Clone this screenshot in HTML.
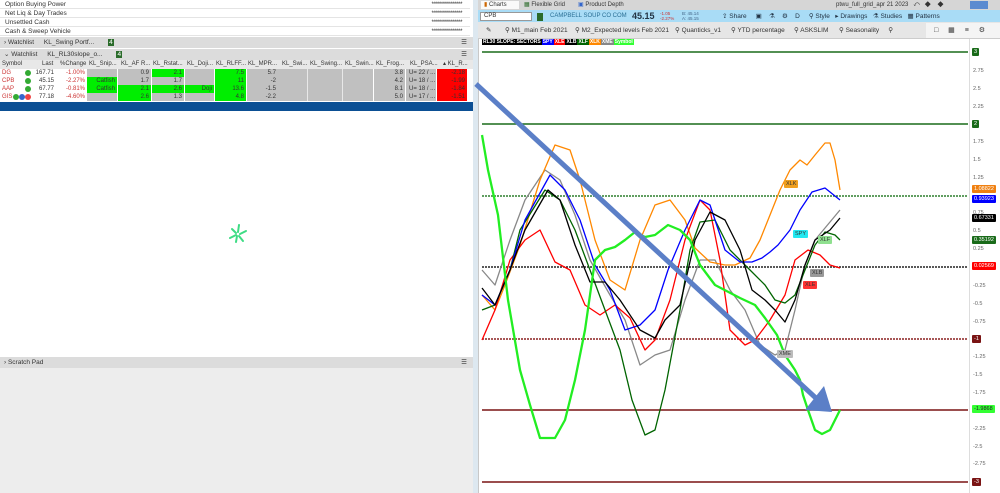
<!DOCTYPE html><html><head><meta charset="utf-8"><style>
*{margin:0;padding:0;box-sizing:border-box}
body{width:1000px;height:493px;overflow:hidden;background:#fff;font-family:"Liberation Sans",sans-serif;font-size:6.5px;color:#333;position:relative}
.a{position:absolute;white-space:nowrap}
.row{position:absolute;left:0;width:470px;height:9px;border-bottom:1px solid #e4e4e4;padding-left:5px;line-height:9px;font-size:6.5px}
.row span{position:absolute;right:8px;letter-spacing:-0.5px}
.hdr{position:absolute;left:0;width:473px;height:11px;background:#dcdcdc;line-height:11px;font-size:6.5px;padding-left:4px}
.c{position:absolute;height:8px;line-height:8px;font-size:6px;text-align:right;padding-right:2px;overflow:hidden}
.g{background:#00ee00}.r{background:#f00}.gr{background:#c0c0c0}
.ax{position:absolute;left:973px;font-size:5.5px;color:#666}
.bx{position:absolute;font-size:5.5px;color:#fff;padding:0 2px;line-height:8px;border-radius:1px}
</style></head><body>
<div class="row" style="top:0">Option Buying Power<span>***************</span></div>
<div class="row" style="top:9px">Net Liq &amp; Day Trades<span>***************</span></div>
<div class="row" style="top:18px">Unsettled Cash<span>***************</span></div>
<div class="row" style="top:27px">Cash &amp; Sweep Vehicle<span>***************</span></div>
<div class="hdr" style="top:37px">› Watchlist <span style="margin-left:8px">KL_Swing Portf...</span><span style="margin-left:14px;background:#2a6b2a;color:#fff;padding:0 1px">4</span><span style="position:absolute;right:6px">☰</span></div>
<div class="hdr" style="top:49px">⌄ Watchlist <span style="margin-left:8px">KL_RL30slope_o...</span><span style="margin-left:14px;background:#2a6b2a;color:#fff;padding:0 1px">4</span><span style="position:absolute;right:6px">☰</span></div>
<div class="a" style="top:60px;left:0;width:473px;height:9px;background:#e8e8e8;font-size:6px;line-height:9px"></div>
<div class="a" style="top:60px;left:2px;font-size:6px;line-height:9px">Symbol</div>
<div class="a" style="top:60px;left:42px;font-size:6px;line-height:9px">Last</div>
<div class="a" style="top:60px;left:60px;font-size:6px;line-height:9px">%Change</div>
<div class="a" style="top:60px;left:89px;font-size:6px;line-height:9px">KL_Snip...</div>
<div class="a" style="top:60px;left:121px;font-size:6px;line-height:9px">KL_AF R...</div>
<div class="a" style="top:60px;left:153px;font-size:6px;line-height:9px">KL_Rstat...</div>
<div class="a" style="top:60px;left:187px;font-size:6px;line-height:9px">KL_Doji...</div>
<div class="a" style="top:60px;left:216px;font-size:6px;line-height:9px">KL_RLFF...</div>
<div class="a" style="top:60px;left:248px;font-size:6px;line-height:9px">KL_MPR...</div>
<div class="a" style="top:60px;left:282px;font-size:6px;line-height:9px">KL_Swi...</div>
<div class="a" style="top:60px;left:310px;font-size:6px;line-height:9px">KL_Swing...</div>
<div class="a" style="top:60px;left:345px;font-size:6px;line-height:9px">KL_Swin...</div>
<div class="a" style="top:60px;left:376px;font-size:6px;line-height:9px">KL_Frog...</div>
<div class="a" style="top:60px;left:410px;font-size:6px;line-height:9px">KL_PSA...</div>
<div class="a" style="top:60px;left:443px;font-size:6px;line-height:9px">▴ KL_R...</div>
<div class="a" style="top:102px;left:0;width:473px;height:9px;background:#0b4f94"></div>
<svg class="a" style="left:228px;top:224px" width="20" height="20" viewBox="0 0 20 20"><g stroke="#3ddc84" stroke-width="2" stroke-linecap="round"><line x1="10" y1="8" x2="11" y2="1"/><line x1="12" y1="10" x2="18" y2="7"/><line x1="11" y1="12" x2="15" y2="17"/><line x1="9" y1="12" x2="8" y2="18"/><line x1="8" y1="11" x2="2" y2="14"/><line x1="8" y1="9" x2="4" y2="5"/></g></svg>
<div class="hdr" style="top:357px;height:11px">› Scratch Pad<span style="position:absolute;right:6px">☰</span></div>
<div class="a" style="top:368px;left:0;width:473px;height:125px;background:#ededed"></div>
<div class="a" style="top:0;left:473px;width:5px;height:493px;background:#dde8f0"></div>
<div class="a" style="top:0;left:478px;width:522px;height:10px;background:#d6d6d6"></div>
<div class="a" style="top:1px;left:481px;width:38px;height:8px;background:#fafafa;font-size:6px;line-height:8px;padding-left:3px"><span style="color:#c60">▮</span> Charts</div>
<div class="a" style="top:1px;left:524px;font-size:6px;line-height:8px"><span style="color:#2a6b2a">▦</span> Flexible Grid</div>
<div class="a" style="top:1px;left:578px;font-size:6px;line-height:8px"><span style="color:#36c">▣</span> Product Depth</div>
<div class="a" style="top:1px;left:836px;font-size:6px;line-height:8px">ptwu_full_grid_apr 21 2023 &nbsp;&nbsp;⤺ &nbsp;&nbsp;◆ &nbsp;&nbsp; ◆</div>
<div class="a" style="top:1px;left:970px;width:18px;height:8px;background:#5b8bd0"></div>
<div class="a" style="top:10px;left:478px;width:522px;height:12px;background:#a9dcf6"></div>
<div class="a" style="top:12px;left:480px;width:52px;height:9px;background:#fff;border:1px solid #999;font-size:6px;line-height:7px;padding-left:3px">CPB</div>
<div class="a" style="top:13px;left:537px;width:6px;height:8px;background:#2a6b2a"></div>
<div class="a" style="top:12px;left:550px;font-size:6px;line-height:9px;color:#2a6f95">CAMPBELL SOUP CO COM</div>
<div class="a" style="top:11px;left:632px;font-size:9px;font-weight:bold;line-height:11px;color:#234">45.15</div>
<div class="a" style="top:11px;left:660px;font-size:4.5px;line-height:5px;color:#c33">-1.05<br>-2.27%</div>
<div class="a" style="top:11px;left:682px;font-size:4.5px;line-height:5px;color:#468">B: 45.14<br>A: 45.15</div>
<div class="a" style="top:12px;left:722px;font-size:6.5px;line-height:9px;color:#234">⇪ Share &nbsp;&nbsp;&nbsp; ▣ &nbsp;&nbsp; ⚗ &nbsp;&nbsp; ⚙ &nbsp;&nbsp; D &nbsp;&nbsp;&nbsp; ⚲ Style &nbsp; ▸ Drawings &nbsp; ⚗ Studies &nbsp; ▦ Patterns</div>
<div class="a" style="top:22px;left:478px;width:522px;height:17px;background:#e6e6e6;border-bottom:1px solid #ccc"></div>
<div class="a" style="top:26px;left:486px;font-size:6.5px;line-height:9px;color:#333">✎</div>
<div class="a" style="top:26px;left:505px;font-size:6.5px;line-height:9px;color:#333">⚲ M1_main Feb 2021</div>
<div class="a" style="top:26px;left:575px;font-size:6.5px;line-height:9px;color:#333">⚲ M2_Expected levels Feb 2021</div>
<div class="a" style="top:26px;left:675px;font-size:6.5px;line-height:9px;color:#333">⚲ Quanticks_v1</div>
<div class="a" style="top:26px;left:731px;font-size:6.5px;line-height:9px;color:#333">⚲ YTD percentage</div>
<div class="a" style="top:26px;left:794px;font-size:6.5px;line-height:9px;color:#333">⚲ ASKSLIM</div>
<div class="a" style="top:26px;left:839px;font-size:6.5px;line-height:9px;color:#333">⚲ Seasonality &nbsp;&nbsp;&nbsp; ⚲</div>
<div class="a" style="top:23px;left:926px;width:74px;height:15px;background:#f4f4f4;font-size:7px;line-height:15px;padding-left:8px;word-spacing:8px">□ ▦ ≡ ⚙</div>
<div class="a" style="top:39px;left:478px;width:1px;height:454px;background:#c8c8c8"></div>
<div class="a" style="top:39px;left:969px;width:1px;height:454px;background:#ddd"></div>
<div class="a" style="top:39px;left:482px;font-size:5px;line-height:6px;font-weight:bold;color:#fff">
<span style="background:#000;padding:0 1px">RL30 SLOPE: SECTORS</span><span style="background:#00f;padding:0 1px">SPY</span><span style="background:#f00;padding:0 1px">XLE</span><span style="background:#000;padding:0 1px">XLB</span><span style="background:#006400;padding:0 1px">XLF</span><span style="background:#f80;padding:0 1px">XLK</span><span style="background:#888;padding:0 1px">XME</span><span style="background:#3f3;padding:0 1px">Symbol</span></div>
<svg class="a" style="left:0;top:0" width="1000" height="493">
<g stroke-width="1.5">
<line x1="482" y1="52" x2="968" y2="52" stroke="#1a6b1a"/>
<line x1="482" y1="124" x2="968" y2="124" stroke="#1a6b1a"/>
<line x1="482" y1="196" x2="968" y2="196" stroke="#2d7f2d" stroke-dasharray="2 1"/>
<line x1="482" y1="267" x2="968" y2="267" stroke="#222" stroke-dasharray="2 1"/>
<line x1="482" y1="339" x2="968" y2="339" stroke="#8b2020" stroke-dasharray="2 1"/>
<line x1="482" y1="410" x2="968" y2="410" stroke="#7a1414"/>
<line x1="482" y1="482" x2="968" y2="482" stroke="#7a1414"/>
</g>
<g fill="none" stroke-width="1.3" stroke-linejoin="round">
<polyline stroke="#888" points="482,270 495,285 510,240 525,200 545,170 560,180 575,215 590,260 610,295 625,320 640,365 655,355 670,350 685,300 700,260 715,260 730,290 745,310 760,345 775,355 785,350 795,310 805,265 815,240 830,222 840,210"/>
<polyline stroke="#f80" points="482,295 495,310 505,285 520,245 540,180 555,145 570,150 580,180 595,240 610,280 625,290 640,240 655,205 670,200 685,220 695,248 710,262 725,265 735,265 750,258 760,240 770,215 780,190 790,170 800,160 807,165 815,155 825,143 830,143 835,160 840,190"/>
<polyline stroke="#f00" points="482,340 495,310 510,260 525,240 540,230 555,262 570,270 585,305 600,315 615,305 630,318 645,350 655,340 670,300 685,240 700,200 710,210 720,260 730,330 745,345 755,340 770,320 785,295 795,260 808,250 820,255 830,265 840,268"/>
<polyline stroke="#006400" points="482,310 495,305 510,270 520,230 545,190 560,200 575,230 590,270 605,310 620,350 632,400 645,435 655,430 665,390 680,310 690,250 700,222 715,220 730,250 750,270 765,285 775,300 785,303 795,295 805,270 815,245 825,232 835,235 840,240"/>
<polyline stroke="#00f" points="482,295 495,305 510,270 525,220 550,175 565,190 580,220 595,265 610,290 625,330 640,325 655,310 668,270 685,230 700,200 710,205 725,250 740,262 752,262 762,258 770,252 778,245 790,230 800,210 812,192 825,188 840,200"/>
<polyline stroke="#000" points="482,288 495,305 510,270 525,230 548,190 560,200 575,245 590,282 605,282 620,300 640,330 655,338 665,320 680,305 695,240 710,212 725,220 740,250 752,290 765,300 775,310 785,322 795,300 805,265 815,240 830,230 840,218"/>
<polyline stroke="#22ee22" stroke-width="2.3" points="482,135 488,170 498,215 508,300 520,370 530,405 540,438 555,438 565,420 575,380 585,330 595,260 605,250 615,247 625,240 635,232 645,237 655,235 668,225 680,230 690,240 700,265 715,285 740,298 755,305 765,318 777,335 785,355 795,370 800,380 803,395 808,410 815,430 822,434 830,430 835,420 840,410"/>
</g>
<line x1="476" y1="84" x2="818" y2="400" stroke="#5b7fc7" stroke-width="5"/>
<polygon points="805,410 832,412 824,386" fill="#5b7fc7"/>
</svg>
<div class="bx" style="left:784px;top:180px;background:#f0a020;color:#333">XLK</div>
<div class="bx" style="left:793px;top:230px;background:#22e8f0;color:#333">SPY</div>
<div class="bx" style="left:818px;top:236px;background:#8fe08f;color:#333">XLF</div>
<div class="bx" style="left:810px;top:269px;background:#999;color:#333">XLB</div>
<div class="bx" style="left:803px;top:281px;background:#f33;color:#333">XLE</div>
<div class="bx" style="left:777px;top:350px;background:#bbb;color:#333">XME</div>
<div class="bx" style="left:972px;top:48px;background:#1a6b1a">3</div>
<div class="ax" style="top:68px">2.75</div><div class="ax" style="top:86px">2.5</div><div class="ax" style="top:104px">2.25</div>
<div class="bx" style="left:972px;top:120px;background:#1a6b1a">2</div>
<div class="ax" style="top:139px">1.75</div><div class="ax" style="top:157px">1.5</div><div class="ax" style="top:175px">1.25</div>
<div class="bx" style="left:972px;top:185px;background:#f08010">1.08822</div>
<div class="bx" style="left:972px;top:195px;background:#00f">0.93923</div>
<div class="ax" style="top:210px">0.75</div>
<div class="bx" style="left:972px;top:214px;background:#000">0.67331</div>
<div class="ax" style="top:228px">0.5</div>
<div class="bx" style="left:972px;top:236px;background:#1a6b1a">0.35192</div>
<div class="ax" style="top:246px">0.25</div>
<div class="bx" style="left:972px;top:262px;background:#f00">0.02569</div>
<div class="ax" style="top:283px">-0.25</div><div class="ax" style="top:301px">-0.5</div><div class="ax" style="top:319px">-0.75</div>
<div class="bx" style="left:972px;top:335px;background:#7a1414">-1</div>
<div class="ax" style="top:354px">-1.25</div><div class="ax" style="top:372px">-1.5</div><div class="ax" style="top:390px">-1.75</div>
<div class="bx" style="left:972px;top:405px;background:#3f3;color:#222">-1.9868</div>
<div class="ax" style="top:426px">-2.25</div><div class="ax" style="top:444px">-2.5</div><div class="ax" style="top:461px">-2.75</div>
<div class="bx" style="left:972px;top:478px;background:#7a1414">-3</div>
<div class="a" style="top:69px;left:0;width:470px;height:33px">
<div class="c" style="top:0;left:2px;color:#c33;text-align:left">DG</div>
<div class="c" style="top:8px;left:2px;color:#c33;text-align:left">CPB</div>
<div class="c" style="top:16px;left:2px;color:#c33;text-align:left">AAP</div>
<div class="c" style="top:24px;left:2px;color:#c33;text-align:left">GIS</div>
<div class="a" style="top:1px;left:25px;width:6px;height:6px;border-radius:50%;background:#3a3"></div>
<div class="a" style="top:9px;left:25px;width:6px;height:6px;border-radius:50%;background:#3a3"></div>
<div class="a" style="top:17px;left:25px;width:6px;height:6px;border-radius:50%;background:#3a3"></div>
<div class="a" style="top:25px;left:13px;width:6px;height:6px;border-radius:50%;background:#3a3"></div>
<div class="a" style="top:25px;left:19px;width:6px;height:6px;border-radius:50%;background:#36c"></div>
<div class="a" style="top:25px;left:25px;width:6px;height:6px;border-radius:50%;background:#e44"></div>
<div class="c" style="top:0;left:32px;width:24px">167.71</div><div class="c" style="top:8px;left:32px;width:24px">45.15</div><div class="c" style="top:16px;left:32px;width:24px">67.77</div><div class="c" style="top:24px;left:32px;width:24px">77.18</div>
<div class="c" style="top:0;left:58px;width:29px;color:#c33">-1.00%</div><div class="c" style="top:8px;left:58px;width:29px;color:#c33">-2.27%</div><div class="c" style="top:16px;left:58px;width:29px;color:#c33">-0.81%</div><div class="c" style="top:24px;left:58px;width:29px;color:#c33">-4.60%</div>
<div class="c gr" style="top:0;left:87px;width:30px"></div><div class="c g" style="top:8px;left:87px;width:30px">Catfish</div><div class="c g" style="top:16px;left:87px;width:30px">Catfish</div><div class="c gr" style="top:24px;left:87px;width:30px"></div>
<div class="c gr" style="top:0;left:118px;width:33px">0.9</div><div class="c gr" style="top:8px;left:118px;width:33px">1.7</div><div class="c g" style="top:16px;left:118px;width:33px">2.1</div><div class="c g" style="top:24px;left:118px;width:33px">2.6</div>
<div class="c g" style="top:0;left:152px;width:32px">2.1</div><div class="c gr" style="top:8px;left:152px;width:32px">1.7</div><div class="c g" style="top:16px;left:152px;width:32px">2.6</div><div class="c gr" style="top:24px;left:152px;width:32px">1.3</div>
<div class="c gr" style="top:0;left:185px;width:29px"></div><div class="c gr" style="top:8px;left:185px;width:29px"></div><div class="c g" style="top:16px;left:185px;width:29px">Doji</div><div class="c gr" style="top:24px;left:185px;width:29px"></div>
<div class="c g" style="top:0;left:215px;width:31px">7.5</div><div class="c g" style="top:8px;left:215px;width:31px">11</div><div class="c g" style="top:16px;left:215px;width:31px">13.6</div><div class="c g" style="top:24px;left:215px;width:31px">4.8</div>
<div class="c gr" style="top:0;left:247px;width:31px">5.7</div><div class="c gr" style="top:8px;left:247px;width:31px">-2</div><div class="c gr" style="top:16px;left:247px;width:31px">-1.5</div><div class="c gr" style="top:24px;left:247px;width:31px">-2.2</div>
<div class="c gr" style="top:0;left:278px;width:95px;height:32px;background:#c0c0c0"></div>
<div class="a" style="top:0;left:307px;width:1px;height:32px;background:#e8e8e8"></div><div class="a" style="top:0;left:342px;width:1px;height:32px;background:#e8e8e8"></div>
<div class="c gr" style="top:0;left:374px;width:31px">3.8</div><div class="c gr" style="top:8px;left:374px;width:31px">4.2</div><div class="c gr" style="top:16px;left:374px;width:31px">8.1</div><div class="c gr" style="top:24px;left:374px;width:31px">5.0</div>
<div class="c gr" style="top:0;left:406px;width:30px;text-align:left;padding-left:3px">U= 22 / ...</div><div class="c gr" style="top:8px;left:406px;width:30px;text-align:left;padding-left:3px">U= 18 / ...</div><div class="c gr" style="top:16px;left:406px;width:30px;text-align:left;padding-left:3px">U= 18 / ...</div><div class="c gr" style="top:24px;left:406px;width:30px;text-align:left;padding-left:3px">U= 17 / ...</div>
<div class="c r" style="top:0;left:437px;width:30px">-2.18</div><div class="c r" style="top:8px;left:437px;width:30px">-1.99</div><div class="c r" style="top:16px;left:437px;width:30px">-1.84</div><div class="c r" style="top:24px;left:437px;width:30px">-1.51</div>
</div>
</body></html>
